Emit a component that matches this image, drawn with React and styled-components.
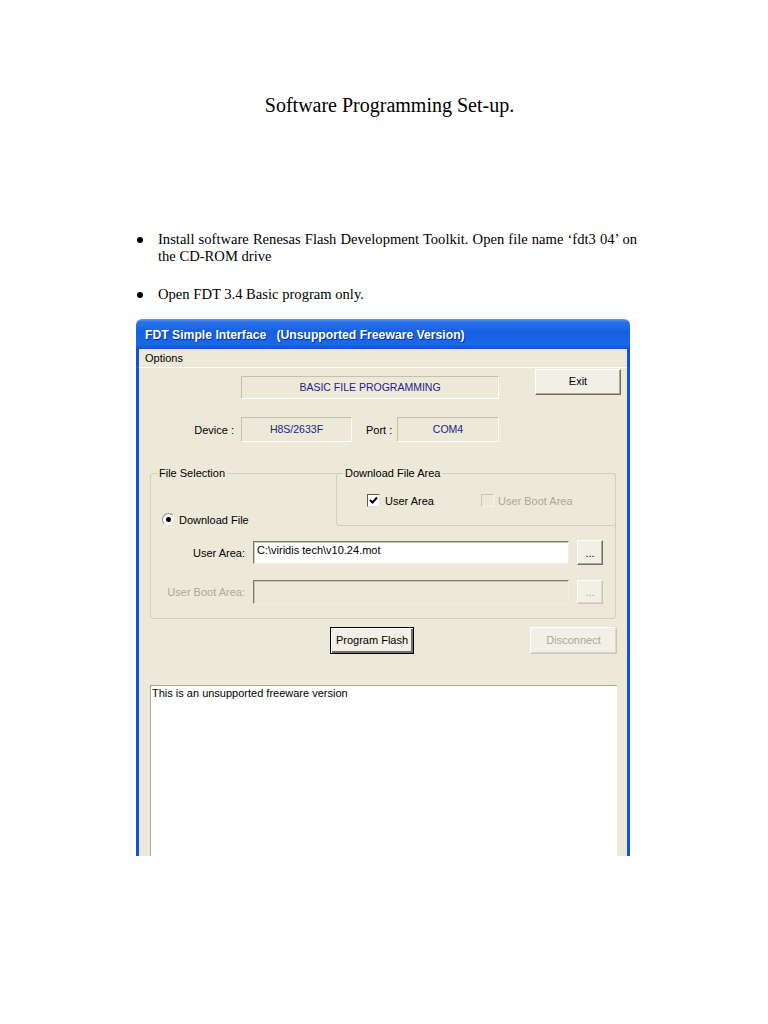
import React from "react";
import styled, { createGlobalStyle } from "styled-components";

const GlobalStyle = createGlobalStyle`
  * { box-sizing: border-box; }
  body {
    margin: 0;
    background: #ffffff;
    font-family: "Liberation Serif", "Times New Roman", serif;
  }
`;

const ui = `"Liberation Sans", Arial, sans-serif`;
const face = "#ECE9D8";

const Page = styled.div`
  width: 768px;
  height: 1024px;
  background: #ffffff;
  overflow: hidden;
`;

const Title = styled.h1`
  margin: 94px 0 0;
  padding-left: 11px;
  font-size: 20px;
  line-height: 22px;
  font-weight: normal;
  text-align: center;
  color: #000;
`;

const List = styled.ul`
  list-style: none;
  margin: 115px 0 0 135px;
  padding: 0;
  width: 502px;
  display: flex;
  flex-direction: column;
  gap: 21px;
`;

const Item = styled.li`
  display: flex;
  font-size: 14.6px;
  line-height: 17px;
  color: #000;
`;

const Bullet = styled.span`
  width: 23px;
  flex: none;
  display: flex;
  padding: 6px 0 0 2px;
  &::before {
    content: "";
    width: 6px;
    height: 6px;
    border-radius: 50%;
    background: #000;
  }
`;

const ItemText = styled.span`
  flex: 1;
  text-align: justify;
`;

const Window = styled.div`
  margin: 16px 0 0 136px;
  width: 494px;
  height: 537px;
  overflow: hidden;
  display: flex;
  flex-direction: column;
`;

const TitleBar = styled.div`
  height: 30px;
  flex: none;
  display: flex;
  align-items: center;
  padding: 2px 0 0 9px;
  border-radius: 6px 6px 0 0;
  background: linear-gradient(
    #5a9cf8 0%,
    #2a70ea 10%,
    #1560e2 45%,
    #1a68e8 85%,
    #0e50d0 100%
  );
  color: #ffffff;
  font-family: ${ui};
  font-weight: bold;
  font-size: 12.2px;
  white-space: pre;
  text-shadow: 1px 1px 0 #0a2f8a;
`;

const Frame = styled.div`
  flex: 1;
  border-left: 3px solid #1450d8;
  border-right: 3px solid #1450d8;
  background: ${face};
  font-family: ${ui};
  font-size: 11px;
  color: #000;
`;

const MenuBar = styled.div`
  height: 19px;
  padding: 2px 0 0 6px;
  line-height: 14px;
  border-bottom: 1px solid #ffffff;
`;

const Row = styled.div`
  display: flex;
  align-items: ${(p) => p.$align || "center"};
  margin-top: ${(p) => p.$top || 0}px;
  margin-left: ${(p) => p.$left || 0}px;
`;

const Static = styled.div`
  width: ${(p) => p.$w}px;
  height: ${(p) => p.$h}px;
  margin-left: ${(p) => p.$left || 0}px;
  margin-top: ${(p) => p.$top || 0}px;
  border: 1px solid;
  border-color: #c3c0ae #ffffff #ffffff #c3c0ae;
  display: flex;
  align-items: center;
  justify-content: center;
  color: #22228f;
  font-size: 10.5px;
  padding-bottom: 2px;
`;

const Label = styled.span`
  width: ${(p) => (p.$w ? `${p.$w}px` : "auto")};
  margin-left: ${(p) => p.$left || 0}px;
  text-align: ${(p) => p.$align || "left"};
  color: ${(p) => (p.$disabled ? "#aca899" : "#000")};
  flex: none;
  white-space: nowrap;
`;

const Button = styled.button`
  width: ${(p) => p.$w}px;
  height: ${(p) => p.$h}px;
  margin-left: ${(p) => p.$left || 0}px;
  margin-top: ${(p) => p.$top || 0}px;
  flex: none;
  padding: 0;
  font-family: ${ui};
  font-size: 11px;
  color: ${(p) => (p.disabled ? "#aca899" : "#000")};
  background: #f1efe6;
  border: 1px solid;
  border-color: ${(p) =>
    p.$default
      ? "#000"
      : p.disabled
      ? "#ffffff #c9c6b6 #c9c6b6 #ffffff"
      : "#ffffff #716f64 #716f64 #ffffff"};
  box-shadow: ${(p) =>
    p.$default
      ? "inset 1px 1px #fff, inset -2px -2px #716f64"
      : p.disabled
      ? "inset -1px -1px #dcd9cb"
      : "inset -1px -1px #aca899"};
  display: flex;
  align-items: ${(p) => (p.$dots ? "flex-end" : "center")};
  justify-content: center;
  padding-bottom: ${(p) => (p.$dots ? 5 : 2)}px;
`;

const Group = styled.div`
  margin: ${(p) => p.$top || 0}px 0 0 ${(p) => p.$left || 0}px;
  width: ${(p) => p.$w}px;
  height: ${(p) => p.$h}px;
  border: 1px solid #d0d0bf;
  border-radius: 3px;
  flex: none;
`;

const InnerGroup = styled(Group)`
  margin: -1px -1px 0 0;
`;

const GroupLabel = styled.div`
  margin: -7px 0 0 6px;
  padding: 0 2px;
  width: fit-content;
  line-height: 13px;
  background: ${face};
`;

const GroupTop = styled.div`
  display: flex;
`;

const GroupLeft = styled.div`
  flex: 1;
`;

const Radio = styled.span`
  width: 13px;
  height: 13px;
  border-radius: 50%;
  border: 1px solid;
  border-color: #8a877a #e6e4da #e6e4da #8a877a;
  background: #fff;
  display: flex;
  align-items: center;
  justify-content: center;
  flex: none;
  &::after {
    content: "";
    width: 5px;
    height: 5px;
    border-radius: 50%;
    background: #000;
  }
`;

const Check = styled.span`
  width: 13px;
  height: 13px;
  flex: none;
  border: 1px solid;
  border-color: ${(p) =>
    p.$disabled ? "#cac7b7 #f4f3ee #f4f3ee #cac7b7" : "#5c5a50 #e6e4da #e6e4da #5c5a50"};
  background: ${(p) => (p.$disabled ? face : "#fff")};
  display: flex;
  align-items: center;
  justify-content: center;
`;

const CheckItem = styled.div`
  display: flex;
  align-items: center;
  gap: ${(p) => p.$gap || 5}px;
  width: ${(p) => (p.$w ? `${p.$w}px` : "auto")};
  flex: none;
`;

const Input = styled.div`
  width: 316px;
  height: ${(p) => p.$h}px;
  margin-left: 8px;
  flex: none;
  border: 1px solid;
  border-color: #7b7a72 #eeeeea #eeeeea #7b7a72;
  box-shadow: inset 1px 1px #c8c5b6;
  background: ${(p) => (p.$disabled ? face : "#fff")};
  padding: 2px 0 0 3px;
  line-height: 13px;
  white-space: nowrap;
`;

const Output = styled.div`
  margin: 31px 0 0 11px;
  width: 467px;
  height: 200px;
  background: #fff;
  border-top: 1px solid #aca899;
  border-left: 1px solid #aca899;
  padding: 1px 0 0 1px;
  line-height: 13px;
`;

const CheckMark = () => (
  <svg width="9" height="9" viewBox="0 0 9 9">
    <path d="M1 4 L3.5 6.5 L8 1.5" fill="none" stroke="#000" strokeWidth="2" />
  </svg>
);

export default function App() {
  return (
    <Page>
      <GlobalStyle />
      <Title>Software Programming Set-up.</Title>
      <List>
        <Item>
          <Bullet />
          <ItemText>
            Install software Renesas Flash Development Toolkit. Open file name
            ‘fdt3 04’ on the CD-ROM drive
          </ItemText>
        </Item>
        <Item>
          <Bullet />
          <ItemText>Open FDT 3.4 Basic program only.</ItemText>
        </Item>
      </List>

      <Window>
        <TitleBar>{"FDT Simple Interface   (Unsupported Freeware Version)"}</TitleBar>
        <Frame>
          <MenuBar>Options</MenuBar>

          <Row $align="flex-start" $top={1}>
            <Static $w={258} $h={23} $left={102} $top={7}>
              BASIC FILE PROGRAMMING
            </Static>
            <Button $w={86} $h={26} $left={36}>
              Exit
            </Button>
          </Row>

          <Row $top={18}>
            <Label $w={95} $align="right">
              Device :
            </Label>
            <Static $w={111} $h={25} $left={7}>
              H8S/2633F
            </Static>
            <Label $w={31} $left={14}>
              Port :
            </Label>
            <Static $w={102} $h={25}>
              COM4
            </Static>
          </Row>

          <Group $top={31} $left={11} $w={466} $h={146}>
            <GroupTop>
              <GroupLeft>
                <GroupLabel>File Selection</GroupLabel>
                <Row $top={33} $left={11}>
                  <CheckItem $gap={4}>
                    <Radio />
                    <span>Download File</span>
                  </CheckItem>
                </Row>
              </GroupLeft>
              <InnerGroup $w={280} $h={53}>
                <GroupLabel>Download File Area</GroupLabel>
                <Row $top={14} $left={30}>
                  <CheckItem $w={114}>
                    <Check>
                      <CheckMark />
                    </Check>
                    <span>User Area</span>
                  </CheckItem>
                  <CheckItem $gap={4}>
                    <Check $disabled />
                    <Label $disabled>User Boot Area</Label>
                  </CheckItem>
                </Row>
              </InnerGroup>
            </GroupTop>

            <Row $top={14}>
              <Label $w={94} $align="right">
                User Area:
              </Label>
              <Input $h={23}>C:\viridis tech\v10.24.mot</Input>
              <Button $w={26} $h={25} $left={8} $dots>
                ...
              </Button>
            </Row>

            <Row $top={15}>
              <Label $w={94} $align="right" $disabled>
                User Boot Area:
              </Label>
              <Input $h={24} $disabled />
              <Button $w={26} $h={24} $left={8} $dots disabled>
                ...
              </Button>
            </Row>
          </Group>

          <Row $top={8}>
            <Button $w={84} $h={27} $left={191} $default>
              Program Flash
            </Button>
            <Button $w={87} $h={27} $left={116} disabled>
              Disconnect
            </Button>
          </Row>

          <Output>This is an unsupported freeware version</Output>
        </Frame>
      </Window>
    </Page>
  );
}
